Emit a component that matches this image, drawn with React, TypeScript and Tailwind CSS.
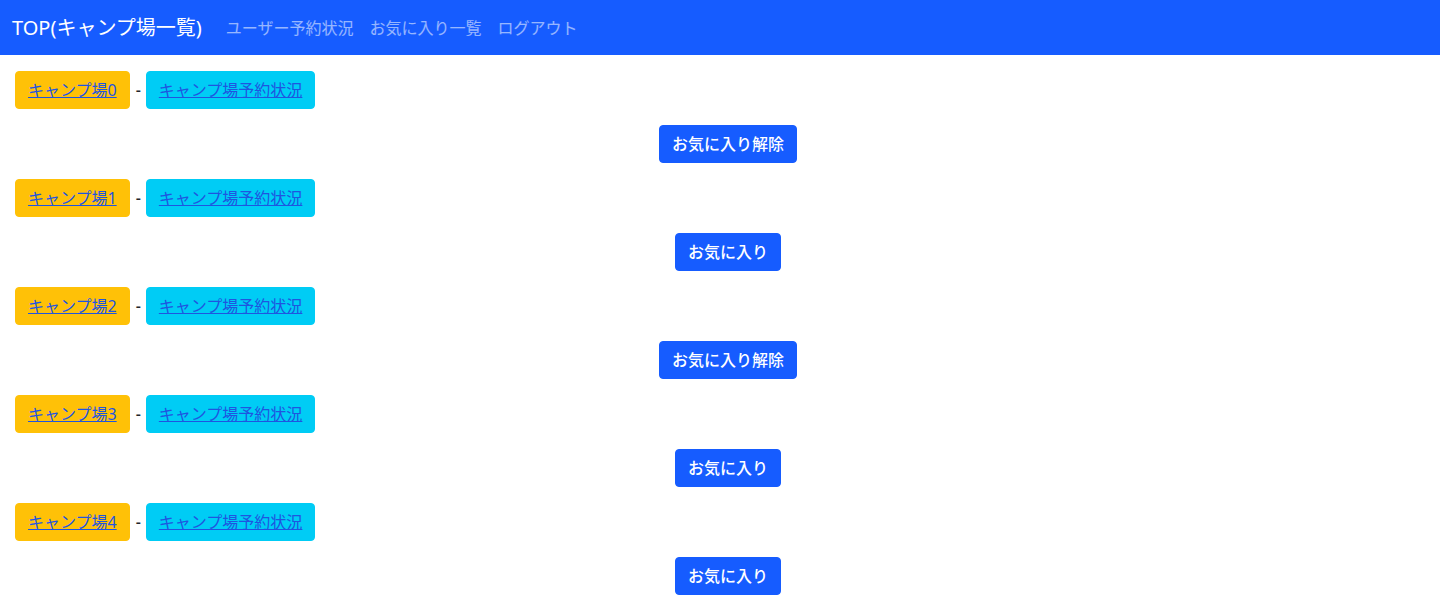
const font = { fontFamily: '"Noto Sans", "Noto Sans CJK JP", sans-serif' }

const camps = [
  { name: 'キャンプ場0', fav: true },
  { name: 'キャンプ場1', fav: false },
  { name: 'キャンプ場2', fav: true },
  { name: 'キャンプ場3', fav: false },
  { name: 'キャンプ場4', fav: false },
]

const App = () => {
  return (
    <div className="min-h-[616px] bg-white text-[#212529]" style={font}>
      <nav className="flex h-[55px] items-center bg-[#165cff] px-3">
        <a href="#" className="mr-4 text-[20px] leading-[30px] text-white">
          TOP(キャンプ場一覧)
        </a>
        <div className="flex">
          <a href="#" className="px-2 py-2 text-base leading-6 text-white/55">ユーザー予約状況</a>
          <a href="#" className="px-2 py-2 text-base leading-6 text-white/55">お気に入り一覧</a>
          <a href="#" className="px-2 py-2 text-base leading-6 text-white/55">ログアウト</a>
        </div>
      </nav>

      <div>
        {camps.map((c) => (
          <div key={c.name} className="pl-[15px] pt-4">
            <div className="flex items-center text-base leading-6">
              <span className="rounded-[4px] border border-[#ffc107] bg-[#ffc107] px-3 py-1.5">
                <a href="#" className="text-[#1f55e0] underline">{c.name}</a>
              </span>
              <span className="pl-[6px] pr-[5px] font-medium">-</span>
              <span className="rounded-[4px] border border-[#00ccf5] bg-[#00ccf5] px-3 py-1.5">
                <a href="#" className="text-[#1f55e0] underline">キャンプ場予約状況</a>
              </span>
            </div>
            <div className="mt-4 flex justify-center pl-px">
              <button className="rounded-[4px] border border-[#165cff] bg-[#165cff] px-3 py-1.5 text-base leading-6 font-medium text-white">
                {c.fav ? 'お気に入り解除' : 'お気に入り'}
              </button>
            </div>
          </div>
        ))}
      </div>
    </div>
  )
}

export default App
